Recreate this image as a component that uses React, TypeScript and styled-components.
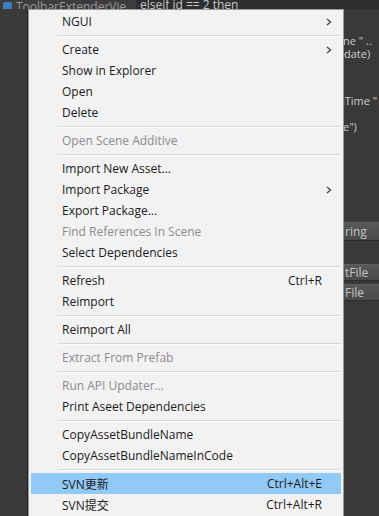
import {createGlobalStyle} from 'styled-components';
import styled from 'styled-components';

const GlobalStyle = createGlobalStyle`
	html, body {
		margin     : 0;
		padding    : 0;
		background : #383838;
	}
	body {
		font-family : "Open Sans", "Noto Sans CJK SC", sans-serif;
	}
`;

const Screen = styled.div`
	display        : flex;
	flex-direction : column;
	position       : relative;
	width          : 379px;
	height         : 516px;
	overflow       : hidden;
	background     : #383838;
`;

const TopBar = styled.div`
	display     : flex;
	align-items : flex-end;
	height      : 9px;
	flex-shrink : 0;
	background  : #2e2e2e;
	overflow    : hidden;
	font-size   : 12px;
	white-space : nowrap;
`;

const Tab = styled.div`
	display      : flex;
	align-items  : center;
	gap          : 4px;
	width        : 133px;
	height       : 12px;
	margin-bottom: -3px;
	padding-left : 3px;
	background   : #3c3c3c;
	color        : #9a9a9a;
	overflow     : hidden;
`;

const TabIcon = styled.span`
	width         : 9px;
	height        : 9px;
	border-radius : 2px;
	background    : #3d7fc4;
	flex-shrink   : 0;
`;

const TopCode = styled.div`
	padding-left  : 4px;
	margin-bottom : -4px;
	color         : #c8c8c8;
`;

const Body = styled.div`
	display : flex;
	flex    : 1;
`;

const SidePanel = styled.div`
	width        : 27px;
	flex-shrink  : 0;
	background   : #3a3a3a;
	border-right : 1px solid #242424;
`;

const Editor = styled.div`
	display        : flex;
	flex-direction : column;
	flex           : 1;
	background     : #393939;
	font-size      : 11px;
	color          : #cfcfcf;
`;

const CodeLine = styled.div<{ $top: number; $indent: number }>`
	height      : 12px;
	line-height : 12px;
	margin-top  : ${({$top}) => $top}px;
	padding-left: ${({$indent}) => $indent}px;
	white-space : nowrap;
`;

const InspectorButton = styled.div<{ $top: number; $indent: number; $h: number }>`
	display       : flex;
	align-items   : center;
	height        : ${({$h}) => $h}px;
	margin-top    : ${({$top}) => $top}px;
	margin-left   : ${({$indent}) => $indent}px;
	padding-left  : 2px;
	background    : linear-gradient(#585858, #4a4a4a);
	border-top    : 1px solid #5e5e5e;
	border-bottom : 1px solid #2c2c2c;
	font-size     : 12px;
	color         : #c4c4c4;
	white-space   : nowrap;
`;

const Menu = styled.div`
	position       : absolute;
	left           : 28px;
	top            : 9px;
	width          : 314px;
	height         : 520px;
	padding-top    : 1px;
	display        : flex;
	flex-direction : column;
	background     : #f2f2f2;
	border         : 1px solid #9a9a9a;
	font-size      : 12px;
`;

const Row = styled.div<{ $disabled?: boolean; $active?: boolean }>`
	display               : grid;
	grid-template-columns : 1fr auto 19px;
	align-items           : center;
	height                : 21px;
	margin                : 0 2px;
	padding-left          : 31px;
	background            : ${({$active}) => $active ? '#91c9f7' : 'transparent'};
	color                 : ${({$disabled}) => $disabled ? '#8c8c8c' : '#1b1b1b'};
	white-space           : nowrap;
`;

const Shortcut = styled.span`
	text-align : right;
`;

const Arrow = styled.svg`
	margin-left : 4px;
`;

const Separator = styled.div`
	height        : 7px;
	display       : flex;
	align-items   : center;
	margin        : 0 2px 0 29px;
	&::after {
		content       : '';
		display       : block;
		width         : 100%;
		height        : 1px;
		background    : #d7d7d7;
		border-bottom : 1px solid #fbfbfb;
	}
`;

type Item = { label?: string; shortcut?: string; sub?: boolean; disabled?: boolean; active?: boolean; sep?: boolean };

const items: Item[] = [
	{label: 'NGUI', sub: true},
	{sep: true},
	{label: 'Create', sub: true},
	{label: 'Show in Explorer'},
	{label: 'Open'},
	{label: 'Delete'},
	{sep: true},
	{label: 'Open Scene Additive', disabled: true},
	{sep: true},
	{label: 'Import New Asset...'},
	{label: 'Import Package', sub: true},
	{label: 'Export Package...'},
	{label: 'Find References In Scene', disabled: true},
	{label: 'Select Dependencies'},
	{sep: true},
	{label: 'Refresh', shortcut: 'Ctrl+R'},
	{label: 'Reimport'},
	{sep: true},
	{label: 'Reimport All'},
	{sep: true},
	{label: 'Extract From Prefab', disabled: true},
	{sep: true},
	{label: 'Run API Updater...', disabled: true},
	{label: 'Print Aseet Dependencies'},
	{sep: true},
	{label: 'CopyAssetBundleName'},
	{label: 'CopyAssetBundleNameInCode'},
	{sep: true},
	{label: 'SVN更新', shortcut: 'Ctrl+Alt+E', active: true},
	{label: 'SVN提交', shortcut: 'Ctrl+Alt+R'}
];

const SubArrow = () => <Arrow width="6" height="8" viewBox="0 0 6 8">
	<polyline points="1,1 4.5,4 1,7" fill="none" stroke="#4a4a4a" strokeWidth="1.4"/>
</Arrow>;

export default function App() {
	return <Screen>
		<GlobalStyle/>
		<TopBar>
			<Tab><TabIcon/>ToolbarExtenderVie</Tab>
			<TopCode>elseif id == 2 then</TopCode>
		</TopBar>
		<Body>
			<SidePanel/>
			<Editor>
				<CodeLine $top={26} $indent={315}>ne " ..</CodeLine>
				<CodeLine $top={1} $indent={316}>date)</CodeLine>
				<CodeLine $top={35} $indent={314}>lTime "</CodeLine>
				<CodeLine $top={14} $indent={315}>e")</CodeLine>
				<InspectorButton $top={89} $indent={315} $h={17}>ring</InspectorButton>
				<InspectorButton $top={23} $indent={315} $h={15}>tFile</InspectorButton>
				<InspectorButton $top={3} $indent={315} $h={15}>File</InspectorButton>
			</Editor>
		</Body>
		<Menu>
			{items.map((it, i) => it.sep
				? <Separator key={i}/>
				: <Row key={i} $disabled={it.disabled} $active={it.active}>
					<span>{it.label}</span>
					<Shortcut>{it.shortcut}</Shortcut>
					<span>{it.sub && <SubArrow/>}</span>
				</Row>)}
		</Menu>
	</Screen>;
}
